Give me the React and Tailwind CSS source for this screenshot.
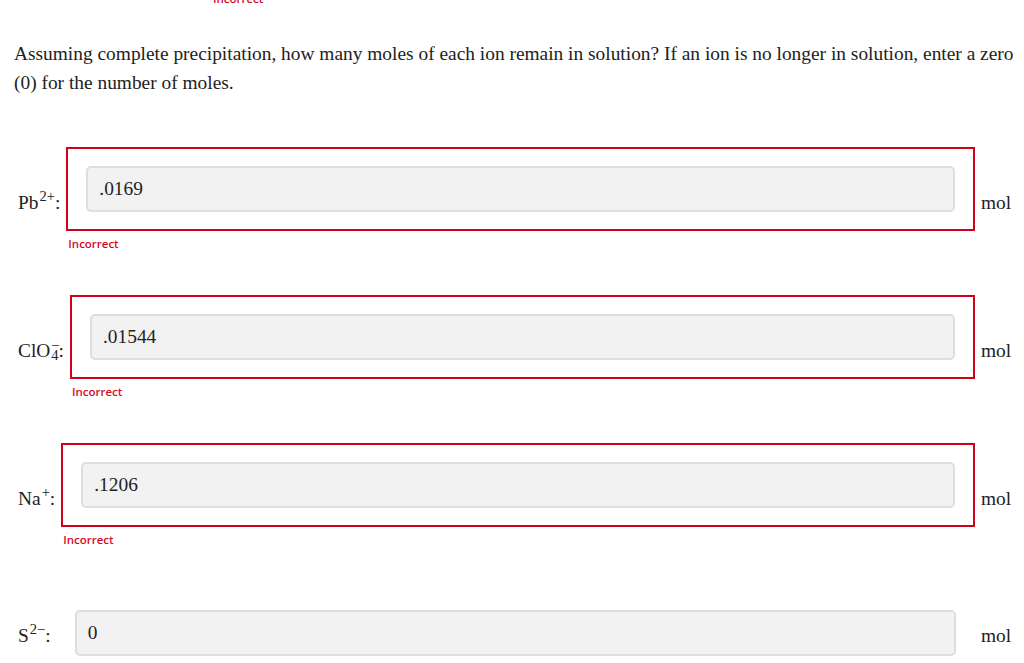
import React from "react";

const serif = { fontFamily: '"Liberation Serif", "Times New Roman", serif' };

const Sup = ({ children }) => (
  <span className="relative -top-[8px] ml-[1px] text-[14.5px] leading-none">{children}</span>
);

const rows = [
  { id: "pb", label: <>Pb<Sup>2+</Sup>:</>, value: ".0169", wrong: true },
  {
    id: "clo4",
    label: (
      <>
        ClO
        <span className="relative inline-block ml-[1px] text-[14.5px] leading-none">
          <span className="relative top-[3px]">4</span>
          <span className="absolute left-0 -top-[7px]">−</span>
        </span>
        :
      </>
    ),
    value: ".01544",
    wrong: true,
  },
  { id: "na", label: <>Na<Sup>+</Sup>:</>, value: ".1206", wrong: true },
  { id: "s", label: <>S<Sup>2−</Sup>:</>, value: "0", wrong: false },
];

function Row({ row }) {
  return (
    <div className="flex items-center pl-[18px]">
      <div className="mt-[5px] mr-[6px] text-[19.4px] leading-[24px] text-[#222] whitespace-nowrap" style={serif}>
        {row.label}
      </div>
      <div className="flex-1 flex flex-col">
        <div
          className={`border-2 py-[17px] ${
            row.wrong ? "px-[18px] border-[#d0021b]" : "pl-[16px] pr-[17px] border-transparent"
          }`}
        >
          <div
            className="h-[46px] rounded-[5px] border-2 border-[#dedede] bg-[#f2f2f2] pl-[11px] pt-[6px] text-[19.4px] text-[#222]"
            style={serif}
          >
            {row.value}
          </div>
        </div>
        {row.wrong && (
          <div
            className="mt-[4px] ml-[2px] text-[11.5px] leading-[18px] font-semibold text-[#d8091f]"
            style={{ fontFamily: '"Open Sans", sans-serif' }}
          >
            Incorrect
          </div>
        )}
      </div>
      <div className="mt-[5px] w-[49px] pl-[6px] text-[19.4px] text-[#222]" style={serif}>
        mol
      </div>
    </div>
  );
}

export default function App() {
  return (
    <div className="w-[1024px] h-[663px] overflow-hidden bg-white">
      <div
        className="-mt-[10px] h-[17px] pl-[213px] text-[11.5px] leading-[17px] font-semibold text-[#d8091f]"
        style={{ fontFamily: '"Open Sans", sans-serif' }}
      >
        Incorrect
      </div>
      <p className="mt-[32px] pl-[14px] pr-[4px] text-[19.4px] leading-[29px] text-[#222]" style={serif}>
        Assuming complete precipitation, how many moles of each ion remain in solution? If an ion is no longer in
        solution, enter a zero (0) for the number of moles.
      </p>
      <div className="mt-[50px] flex flex-col gap-[42px]">
        {rows.map((r) => (
          <Row key={r.id} row={r} />
        ))}
      </div>
    </div>
  );
}
